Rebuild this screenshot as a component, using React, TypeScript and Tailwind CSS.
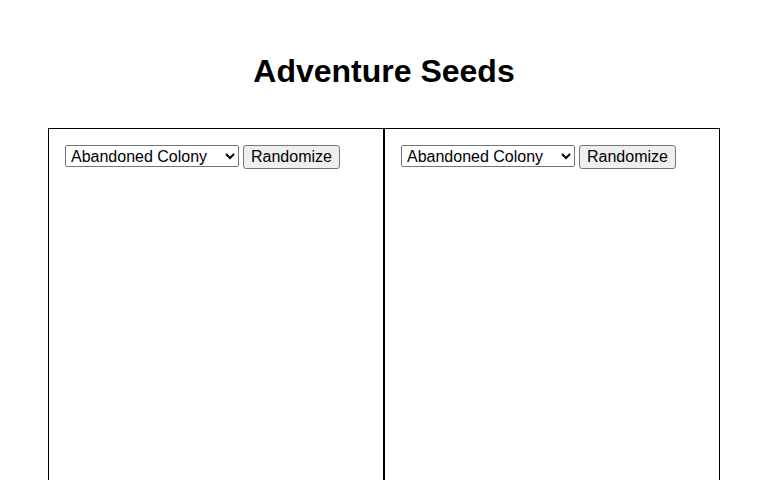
import React from "react";

function Panel() {
  return (
    <div className="w-[336px] h-[400px] border border-black p-4">
      <div className="flex items-start gap-1">
        <select
          defaultValue="Abandoned Colony"
          className="w-[174px] h-[22px] border border-[#767676] rounded-[2px] bg-white text-black text-[16px] leading-[18px] pl-[1px] pr-0"
        >
          <option>Abandoned Colony</option>
          <option>Haunted Keep</option>
          <option>Lost Temple</option>
        </select>
        <button className="h-[24px] border border-[#767676] rounded-[3px] bg-[#efefef] text-black text-[16px] leading-[18px] px-[7px]">
          Randomize
        </button>
      </div>
    </div>
  );
}

export default function App() {
  return (
    <div
      className="h-[480px] overflow-hidden bg-white text-black"
      style={{ fontFamily: '"Liberation Sans", Arial, sans-serif' }}
    >
      <h1 className="text-[32px] font-bold text-center leading-[37px] pt-[53px] pb-[38px]">
        Adventure Seeds
      </h1>
      <div className="flex px-[48px]">
        <Panel />
        <Panel />
      </div>
    </div>
  );
}
